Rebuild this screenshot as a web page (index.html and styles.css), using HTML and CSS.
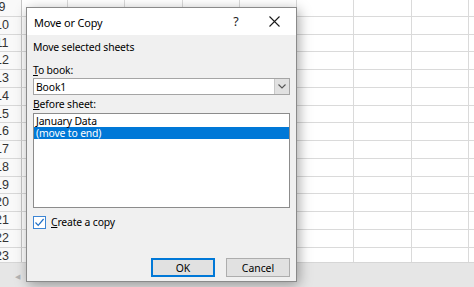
FILE: index.html
```html
<!DOCTYPE html>
<html lang="en">
<head>
  <meta charset="UTF-8" />
  <title>Move or Copy</title>
  <link rel="stylesheet" href="styles.css">
</head>
<body>
  <div class="sheet">
    <div class="grid" id="grid"></div>
  </div>
  <div class="statusbar">
    <span class="scroll-left">&#9664;</span>
  </div>

  <div class="dialog">
    <div class="titlebar">
      <span class="title">Move or Copy</span>
      <span class="help">?</span>
      <span class="close">
        <svg width="11" height="11" viewBox="0 0 11 11"><path d="M0.5 0.5 L10.5 10.5 M10.5 0.5 L0.5 10.5" stroke="#1a1a1a" stroke-width="1.1" fill="none"/></svg>
      </span>
    </div>
    <div class="body">
      <div class="line">Move selected sheets</div>
      <div class="line label-book"><u>T</u>o book:</div>
      <div class="combo">
        <span class="combo-text">Book1</span>
        <span class="combo-btn">
          <svg width="8" height="5" viewBox="0 0 8 5"><path d="M0.5 0.5 L4 4 L7.5 0.5" stroke="#555" stroke-width="1.1" fill="none"/></svg>
        </span>
      </div>
      <div class="line label-before"><u>B</u>efore sheet:</div>
      <div class="listbox">
        <div class="item">January Data</div>
        <div class="item selected">(move to end)</div>
      </div>
      <div class="check-row">
        <span class="checkbox">
          <svg width="11" height="11" viewBox="0 0 11 11"><path d="M1.5 5.5 L4.2 8.3 L9.6 2" stroke="#1f6fc5" stroke-width="1.2" fill="none"/></svg>
        </span>
        <span class="line"><u>C</u>reate a copy</span>
      </div>
      <div class="buttons">
        <button class="btn default">OK</button>
        <button class="btn">Cancel</button>
      </div>
    </div>
  </div>

  <script>
    const grid = document.getElementById("grid");
    for (let r = 9; r <= 23; r++) {
      const head = document.createElement("div");
      head.className = "rowhead";
      head.textContent = r;
      grid.appendChild(head);
      for (let c = 0; c < 9; c++) {
        const cell = document.createElement("div");
        cell.className = "cell";
        grid.appendChild(cell);
      }
    }
  </script>
</body>
</html>
```

FILE: styles.css
```css
body {
  margin: 0;
  width: 474px;
  height: 287px;
  overflow: hidden;
  background: #fff;
  font-family: "Noto Sans", "Open Sans", sans-serif;
  font-size: 10.4px;
  letter-spacing: -0.15px;
  color: #000;
  position: relative;
}

.sheet {
  height: 262px;
  overflow: hidden;
}

.grid {
  display: grid;
  grid-template-columns: 39px 46px repeat(8, 57.25px);
  grid-auto-rows: 17.75px;
  margin-left: -17px;
  margin-top: -1px;
}

.rowhead {
  background: #f9f9f9;
  border-right: 1px solid #c6c6c6;
  border-bottom: 1px solid #d8d8d8;
  box-sizing: border-box;
  text-align: center;
  font-size: 12.5px;
  letter-spacing: 0;
  line-height: 17px;
  color: #333;
  font-family: "Liberation Sans", sans-serif;
}

.cell {
  border-right: 1px solid #dadada;
  border-bottom: 1px solid #dadada;
  box-sizing: border-box;
}

.statusbar {
  height: 25px;
  background: #e6e6e6;
  border-top: 1px solid #d6d6d6;
  box-sizing: border-box;
  display: flex;
  align-items: center;
  padding-left: 15px;
}

.scroll-left {
  font-size: 7px;
  color: #b4b4b4;
  margin-top: 2px;
}

/* the dialog window floats above the sheet */
.dialog {
  position: absolute;
  left: 26px;
  top: 7px;
  width: 271px;
  height: 275px;
  box-sizing: border-box;
  border: 1px solid #8a8a8a;
  background: #f0f0f0;
  box-shadow: 2px 3px 12px rgba(0, 0, 0, 0.35);
  display: flex;
  flex-direction: column;
}

.titlebar {
  height: 27px;
  background: #fff;
  display: flex;
  align-items: center;
  padding-left: 7px;
}

.title {
  flex: 1;
  font-size: 10.9px;
  margin-top: 1px;
}

.help {
  width: 20px;
  text-align: center;
  font-size: 12.5px;
  margin-right: 5px;
  color: #222;
}

.close {
  width: 46px;
  display: flex;
  justify-content: center;
  align-items: center;
  margin-right: -1px;
}

.body {
  padding: 5px 6px 0 6px;
  display: flex;
  flex-direction: column;
}

.line {
  line-height: 14px;
  white-space: nowrap;
}

.label-book {
  margin-top: 9px;
}

.combo {
  margin-top: 1px;
  height: 17px;
  box-sizing: border-box;
  border: 1px solid #a5a5a5;
  background: #fff;
  display: flex;
  align-items: center;
}

.combo-text {
  flex: 1;
  padding-left: 2px;
  line-height: 14px;
}

.combo-btn {
  width: 15px;
  height: 15px;
  box-sizing: border-box;
  background: #e1e1e1;
  border-left: 1px solid #c8c8c8;
  display: flex;
  justify-content: center;
  align-items: center;
}

.label-before {
  margin-top: 2px;
}

.listbox {
  margin-top: 2px;
  height: 95px;
  box-sizing: border-box;
  border: 1px solid #8c8c8c;
  background: #fff;
  padding: 1px 0 0 0;
}

.item {
  height: 12px;
  line-height: 12px;
  padding-left: 2px;
  white-space: nowrap;
}

.item.selected {
  background: #0078d7;
  color: #fff;
}

.check-row {
  margin-top: 7px;
  display: flex;
  align-items: center;
  gap: 5px;
}

.checkbox {
  width: 13px;
  height: 13px;
  box-sizing: border-box;
  border: 1px solid #3c85d4;
  background: #fff;
  display: flex;
  justify-content: center;
  align-items: center;
}

.buttons {
  margin-top: 29px;
  display: flex;
  justify-content: flex-end;
  gap: 11px;
}

.btn {
  width: 64px;
  height: 19px;
  box-sizing: border-box;
  border: 1px solid #adadad;
  background: #e1e1e1;
  font-family: "Noto Sans", "Open Sans", sans-serif;
  font-size: 10.4px;
  padding: 0;
  line-height: 16px;
  color: #000;
}

.btn.default {
  border: 2px solid #0078d7;
  line-height: 14px;
}
```
